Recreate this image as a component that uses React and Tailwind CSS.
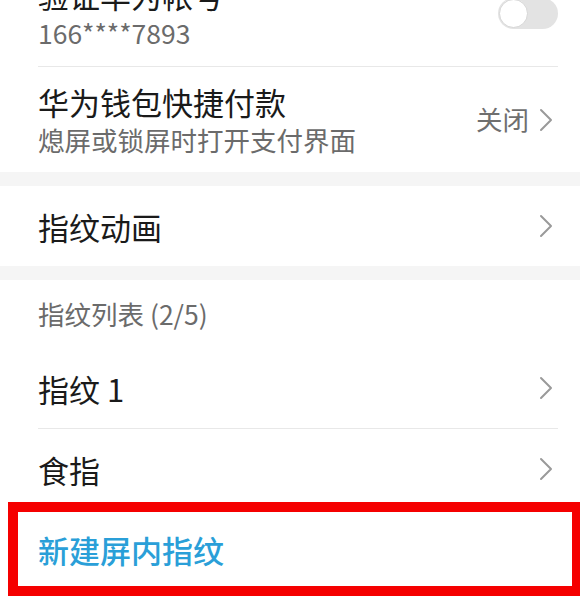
import React from "react";

const font = { fontFamily: '"Noto Sans CJK SC", "Noto Sans", sans-serif' };

function Chevron() {
  return (
    <svg width="14" height="24" viewBox="0 0 14 24" className="shrink-0">
      <polyline points="2,2 12,12 2,22" fill="none" stroke="#9a9a9a" strokeWidth="2" strokeLinecap="round" strokeLinejoin="round" />
    </svg>
  );
}

function Toggle() {
  return (
    <div className="w-[60px] h-[31px] rounded-full bg-[#e3e3e3] flex items-center p-[1px] shrink-0">
      <div className="w-[29px] h-[29px] rounded-full bg-white border border-[#d6d6d6]" />
    </div>
  );
}

function Divider() {
  return <div className="ml-[38px] mr-[22px] h-px bg-[#e8e8e8]" />;
}

function Band() {
  return <div className="h-[14px] bg-[#f5f5f5]" />;
}

function Row({ title, right }) {
  return (
    <div className="h-[80px] flex items-center justify-between pl-[38px] pr-[27px]">
      <span className="text-[31px] text-[#1a1a1a] leading-none">{title}</span>
      {right}
    </div>
  );
}

export default function App() {
  return (
    <div className="w-[580px] h-[614px] overflow-hidden bg-white" style={font}>
      {/* 验证华为帐号 (scrolled, top clipped) */}
      <div className="-mt-[40px] h-[106px] flex items-center justify-between pl-[38px] pr-[22px]">
        <div className="flex flex-col">
          <span className="text-[31px] text-[#1a1a1a] leading-[40px]">验证华为帐号</span>
          <span className="text-[26.5px] text-[#6b6b6b] leading-[36px]">166****7893</span>
        </div>
        <Toggle />
      </div>
      <Divider />

      <div className="h-[105px] flex items-center justify-between pl-[38px] pr-[27px]">
        <div className="flex flex-col">
          <span className="text-[31px] text-[#1a1a1a] leading-[40px]">华为钱包快捷付款</span>
          <span className="text-[26.5px] text-[#6b6b6b] leading-[36px]">熄屏或锁屏时打开支付界面</span>
        </div>
        <div className="flex items-center gap-[10px]">
          <span className="text-[26.5px] text-[#6f6f6f] leading-none">关闭</span>
          <Chevron />
        </div>
      </div>
      <Band />

      <Row title="指纹动画" right={<Chevron />} />
      <Band />

      <div className="h-[68px] flex items-center pl-[38px]">
        <span className="text-[26.5px] text-[#6b6b6b] leading-none">指纹列表 (2/5)</span>
      </div>

      <Row title="指纹 1" right={<Chevron />} />
      <Divider />
      <Row title="食指" right={<Chevron />} />

      <div className="relative h-[80px] flex items-center pl-[38px]">
        <span className="text-[31px] font-medium text-[#2a9fd8] leading-none">新建屏内指纹</span>
        <div className="absolute left-[8px] -right-[2px] -top-[7px] -bottom-[7px] border-[10px] border-[#f50000]" />
      </div>
    </div>
  );
}
